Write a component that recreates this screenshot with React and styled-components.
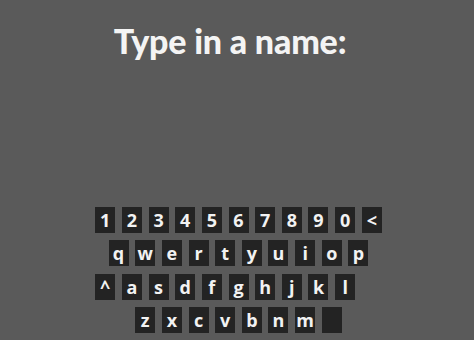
import styled, { createGlobalStyle } from "styled-components";

const GlobalStyle = createGlobalStyle`
  html, body {
    margin: 0;
    padding: 0;
    background: #5a5a5a;
  }
  body {
    font-family: "Lato", "Open Sans", sans-serif;
  }
`;

const Screen = styled.div`
  width: 474px;
  height: 340px;
  display: flex;
  flex-direction: column;
  align-items: center;
  box-sizing: border-box;
  overflow: hidden;
`;

const Title = styled.h1`
  margin: 21px 0 0 -14px;
  color: #f4f4f4;
  font-size: 34px;
  font-weight: 900;
  line-height: 40px;
  letter-spacing: -0.2px;
`;

const Keyboard = styled.div`
  margin-top: auto;
  margin-bottom: 7px;
  margin-left: 3px;
  display: flex;
  flex-direction: column;
  gap: 7.33px;
`;

const Row = styled.div`
  display: flex;
  justify-content: center;
  gap: 6.67px;
`;

const Key = styled.div`
  width: 20px;
  height: 26px;
  background: ${({ $hidden }) => ($hidden ? "transparent" : "#232323")};
  color: #f2f2f2;
  font-family: "Open Sans", sans-serif;
  font-size: 18px;
  font-weight: 700;
  line-height: 27px;
  text-align: center;
  overflow: hidden;
`;

const rows = [
  ["1", "2", "3", "4", "5", "6", "7", "8", "9", "0", "<"],
  ["q", "w", "e", "r", "t", "y", "u", "i", "o", "p"],
  ["^", "a", "s", "d", "f", "g", "h", "j", "k", "l", null],
  ["z", "x", "c", "v", "b", "n", "m", " "],
];

export default function App() {
  return (
    <Screen>
      <GlobalStyle />
      <Title>Type in a name:</Title>
      <Keyboard>
        {rows.map((row, i) => (
          <Row key={i}>
            {row.map((k, j) =>
              k === null ? (
                <Key key={j} $hidden />
              ) : (
                <Key key={j}>{k}</Key>
              )
            )}
          </Row>
        ))}
      </Keyboard>
    </Screen>
  );
}
